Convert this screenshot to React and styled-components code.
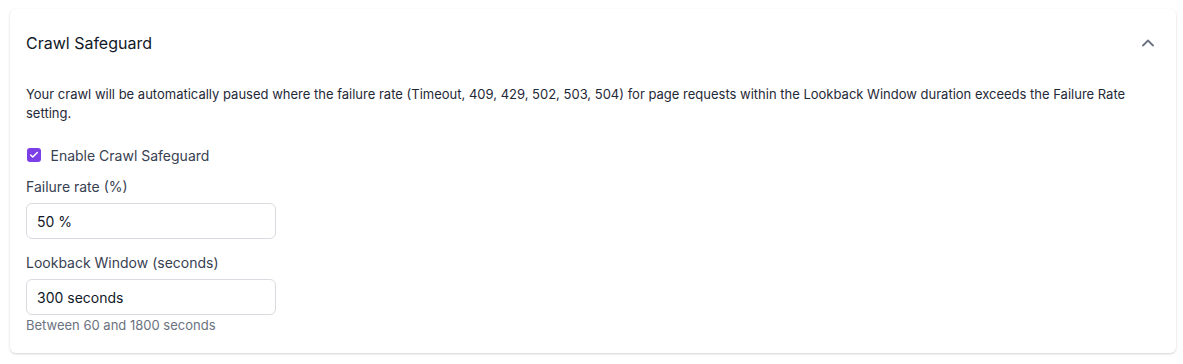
import React from "react";
import styled, { createGlobalStyle } from "styled-components";

const Global = createGlobalStyle`
  html, body { margin: 0; padding: 0; background: #ffffff; }
  body { font-family: Inter, "Noto Sans", "Liberation Sans", sans-serif; -webkit-font-smoothing: antialiased; }
  * { box-sizing: border-box; }
`;

const Page = styled.div`
  padding: 9px 7px 11px 10px;
`;

const Card = styled.section`
  background: #ffffff;
  border-radius: 6px;
  box-shadow: 0 1px 3px rgba(0, 0, 0, 0.12), 0 1px 2px rgba(0, 0, 0, 0.06);
`;

const Header = styled.div`
  display: flex;
  align-items: center;
  justify-content: space-between;
  padding: 24px 18px 24px 16px;
`;

const Title = styled.h2`
  margin: 0;
  font-size: 16px;
  line-height: 20px;
  font-weight: 400;
  color: #111827;
`;

const ToggleButton = styled.button`
  display: flex;
  align-items: center;
  justify-content: center;
  width: 20px;
  height: 20px;
  padding: 0;
  border: 0;
  background: none;
  color: #6b7280;
  cursor: pointer;
`;

const Body = styled.div`
  display: flex;
  flex-direction: column;
  padding: 8px 16px 20px 16px;
`;

const Description = styled.p`
  margin: 0 0 22px 0;
  font-size: 13px;
  line-height: 19px;
  color: #1f2937;
`;

const CheckRow = styled.label`
  display: flex;
  align-items: center;
  gap: 10px;
  height: 20px;
  margin-bottom: 12px;
  font-size: 14px;
  color: #374151;
  cursor: pointer;
`;

const CheckBox = styled.span`
  display: flex;
  align-items: center;
  justify-content: center;
  width: 14px;
  height: 14px;
  margin-left: 0.5px;
  border-radius: 3px;
  background: ${(p) => (p.$checked ? "#7c3ee6" : "#ffffff")};
  border: ${(p) => (p.$checked ? "none" : "1px solid #d1d5db")};
`;

const Field = styled.div`
  display: flex;
  flex-direction: column;
  margin-bottom: ${(p) => p.$spacing || 0}px;
`;

const FieldLabel = styled.label`
  font-size: 14px;
  line-height: 20px;
  color: #374151;
  margin-bottom: 6px;
`;

const Input = styled.input`
  width: 250px;
  height: 36px;
  padding: 0 10px;
  border: 1px solid #d9dbe0;
  border-radius: 6px;
  font-family: inherit;
  font-size: 14px;
  color: #111827;
  background: #ffffff;
  outline: none;
`;

const Hint = styled.span`
  margin-top: 2px;
  font-size: 13px;
  line-height: 16px;
  color: #6b7280;
`;

export default function App() {
  return (
    <>
      <Global />
      <Page>
        <Card>
          <Header>
            <Title>Crawl Safeguard</Title>
            <ToggleButton aria-label="Collapse">
              <svg width="20" height="20" viewBox="0 0 24 24" fill="none" stroke="currentColor" strokeWidth="2.2" strokeLinecap="round" strokeLinejoin="round">
                <path d="m18 15-6-6-6 6" />
              </svg>
            </ToggleButton>
          </Header>
          <Body>
            <Description>
              Your crawl will be automatically paused where the failure rate (Timeout, 409, 429, 502, 503, 504) for page requests within the Lookback Window duration exceeds the Failure Rate setting.
            </Description>
            <CheckRow>
              <CheckBox $checked>
                <svg width="10" height="10" viewBox="0 0 24 24" fill="none" stroke="#ffffff" strokeWidth="3.5" strokeLinecap="round" strokeLinejoin="round">
                  <path d="M20 6 9 17l-5-5" />
                </svg>
              </CheckBox>
              Enable Crawl Safeguard
            </CheckRow>
            <Field $spacing={14}>
              <FieldLabel>Failure rate (%)</FieldLabel>
              <Input defaultValue="50 %" />
            </Field>
            <Field>
              <FieldLabel>Lookback Window (seconds)</FieldLabel>
              <Input defaultValue="300 seconds" />
              <Hint>Between 60 and 1800 seconds</Hint>
            </Field>
          </Body>
        </Card>
      </Page>
    </>
  );
}
